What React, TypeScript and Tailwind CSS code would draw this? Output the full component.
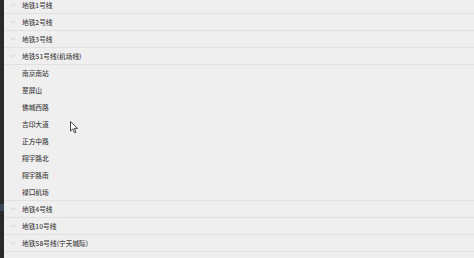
import React from "react";

type Row = { label: string; group: boolean; last?: boolean };

const rows: Row[] = [
  { label: "地铁1号线", group: true },
  { label: "地铁2号线", group: true },
  { label: "地铁3号线", group: true },
  { label: "地铁S1号线(机场线)", group: true },
  { label: "南京南站", group: false },
  { label: "翠屏山", group: false },
  { label: "佛城西路", group: false },
  { label: "吉印大道", group: false },
  { label: "正方中路", group: false },
  { label: "翔宇路北", group: false },
  { label: "翔宇路南", group: false },
  { label: "禄口机场", group: false, last: true },
  { label: "地铁4号线", group: true },
  { label: "地铁10号线", group: true },
  { label: "地铁S8号线(宁天城际)", group: true },
];

const Chevron = () => (
  <svg width="6" height="4" viewBox="0 0 6 4" className="block">
    <path d="M0.5 1 L3 2.6 L5.5 1" fill="none" stroke="#d2d2d2" strokeWidth="0.9" />
  </svg>
);

const Cursor = () => (
  <svg width="9" height="13" viewBox="0 0 9 13" className="absolute left-[70px] top-[121px]">
    <path d="M0.5 0.5 L0.5 10 L2.8 7.9 L4.6 11.8 L6 11.1 L4.3 7.4 L7.5 7.4 Z" fill="#fff" stroke="#333" strokeWidth="0.9" />
  </svg>
);

export default function App() {
  return (
    <div
      className="relative flex h-[258px] w-[474px] overflow-hidden bg-[#efefef]"
      style={{ fontFamily: '"Noto Sans CJK SC", "Noto Sans", sans-serif' }}
    >
      {/* left dark edge */}
      <div className="flex w-[4px] shrink-0 flex-col bg-[#2a2a2a]">
        <div className="h-[204px]" />
        <div className="h-[7px] bg-[#3b4650]" />
      </div>

      <ul className="-mt-[3px] flex flex-1 flex-col">
        {rows.map((row, i) => (
          <li
            key={i}
            className={`flex h-[17px] shrink-0 items-center ${
              row.group || row.last ? "border-b border-[#e1e1e1]" : ""
            }`}
          >
            <div className="flex w-[16px] justify-center pl-[2px]">
              {row.group && <Chevron />}
            </div>
            <span className="pl-[2px] text-[6.7px] font-medium leading-none text-[#474747]">{row.label}</span>
          </li>
        ))}
      </ul>

      <Cursor />
    </div>
  );
}
